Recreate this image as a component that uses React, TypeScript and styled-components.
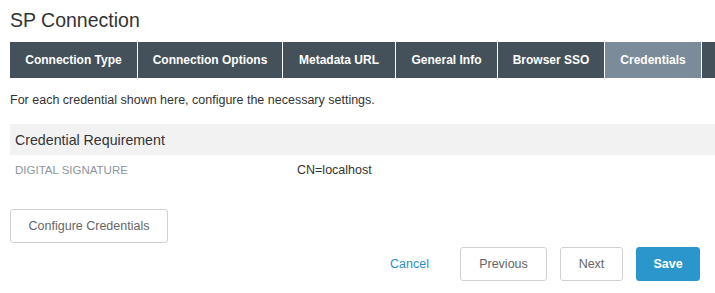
import React from "react";
import styled, { createGlobalStyle } from "styled-components";

const Global = createGlobalStyle`
  html, body { margin: 0; padding: 0; background: #fff; overflow: hidden; }
  body { font-family: "Liberation Sans", Arial, sans-serif; color: #333; }
`;

const Page = styled.div`
  width: 715px;
  height: 293px;
  overflow: hidden;
  padding: 8px 0 0 10px;
  box-sizing: border-box;
`;

const Title = styled.h1`
  margin: 0;
  font-size: 19.5px;
  line-height: 24px;
  font-weight: normal;
  color: #333;
`;

const TabBar = styled.div`
  display: flex;
  gap: 1px;
  margin-top: 10px;
  height: 36px;
  width: 760px;
  background: #fff;
`;

const Tab = styled.div<{ $w: number; $active?: boolean }>`
  flex: 0 0 ${(p) => p.$w}px;
  display: flex;
  align-items: center;
  justify-content: center;
  background: ${(p) => (p.$active ? "#7b8b9a" : "#44515b")};
  color: #fff;
  font-size: 12px;
  font-weight: bold;
  white-space: nowrap;
`;

const Intro = styled.p`
  margin: 14px 0 0;
  font-size: 12.5px;
  line-height: 16px;
  color: #333;
`;

const SectionHeader = styled.div`
  margin-top: 16px;
  height: 31px;
  display: flex;
  align-items: center;
  padding-left: 5px;
  background: #f2f2f3;
  font-size: 14.2px;
  color: #333;
`;

const Row = styled.div`
  height: 30px;
  display: grid;
  grid-template-columns: 282px 1fr;
  align-items: center;
  padding-left: 5px;
`;

const Label = styled.span`
  font-size: 11.5px;
  color: #8e969d;
  text-transform: uppercase;
`;

const Value = styled.span`
  font-size: 12.5px;
  color: #333;
`;

const Button = styled.button<{ $w: number; $primary?: boolean }>`
  width: ${(p) => p.$w}px;
  height: 34px;
  box-sizing: border-box;
  border-radius: 3px;
  border: 1px solid ${(p) => (p.$primary ? "#2b96cc" : "#cfd2d4")};
  background: ${(p) => (p.$primary ? "#2b96cc" : "#fff")};
  color: ${(p) => (p.$primary ? "#fff" : "#666")};
  font-family: "Liberation Sans", Arial, sans-serif;
  font-size: 12.5px;
  font-weight: ${(p) => (p.$primary ? "bold" : "normal")};
  padding: 0;
  cursor: pointer;
`;

const ConfigureWrap = styled.div`
  margin-top: 24px;
`;

const Footer = styled.div`
  margin-top: 4px;
  display: flex;
  justify-content: flex-end;
  align-items: center;
  gap: 13px;
  padding-right: 15px;
`;

const CancelLink = styled.a`
  font-size: 12.5px;
  color: #2a8fc7;
  margin-right: 18px;
  cursor: pointer;
`;

const tabs = [
  { label: "Connection Type", w: 127 },
  { label: "Connection Options", w: 144 },
  { label: "Metadata URL", w: 112 },
  { label: "General Info", w: 101 },
  { label: "Browser SSO", w: 106 },
  { label: "Credentials", w: 96, active: true },
  { label: "", w: 150 },
];

export default function App() {
  return (
    <>
      <Global />
      <Page>
        <Title>SP Connection</Title>
        <TabBar>
          {tabs.map((t, i) => (
            <Tab key={i} $w={t.w} $active={t.active}>
              {t.label}
            </Tab>
          ))}
        </TabBar>
        <Intro>For each credential shown here, configure the necessary settings.</Intro>
        <SectionHeader>Credential Requirement</SectionHeader>
        <Row>
          <Label>Digital Signature</Label>
          <Value>CN=localhost</Value>
        </Row>
        <ConfigureWrap>
          <Button $w={158}>Configure Credentials</Button>
        </ConfigureWrap>
        <Footer>
          <CancelLink>Cancel</CancelLink>
          <Button $w={87}>Previous</Button>
          <Button $w={63}>Next</Button>
          <Button $w={64} $primary>Save</Button>
        </Footer>
      </Page>
    </>
  );
}
